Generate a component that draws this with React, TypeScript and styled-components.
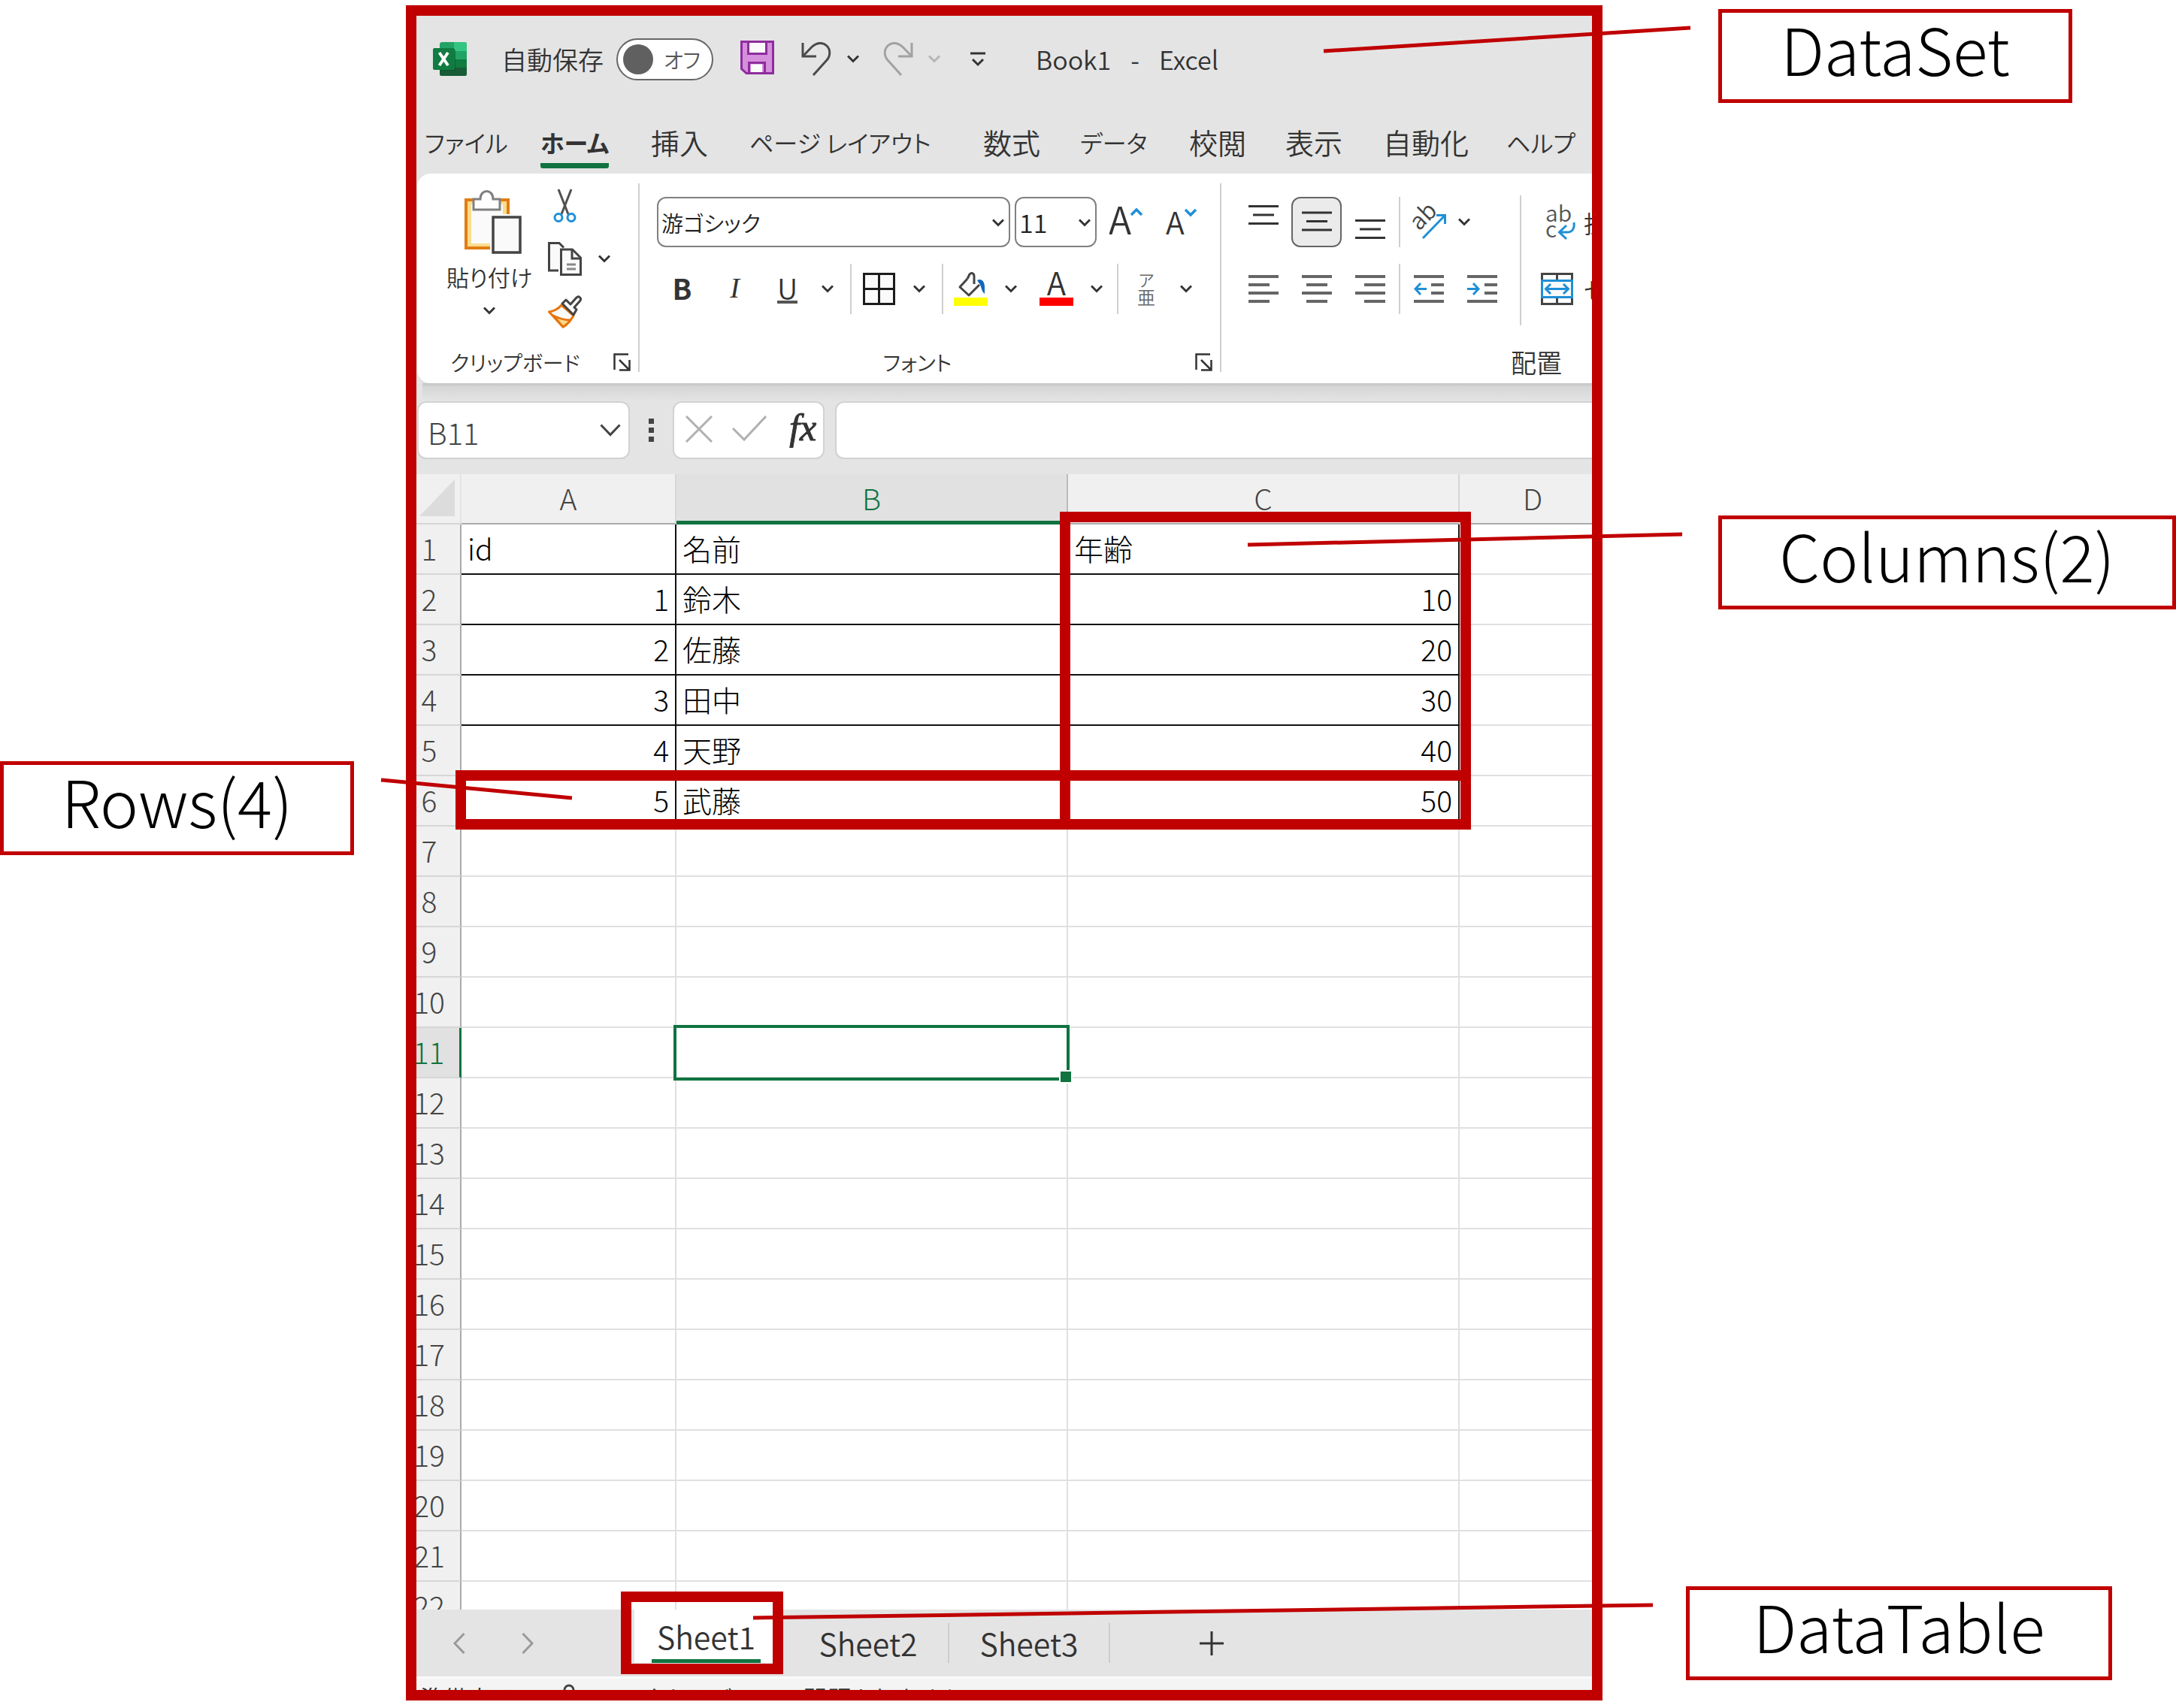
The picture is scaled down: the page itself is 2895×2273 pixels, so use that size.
import React from "react";
import styled, { createGlobalStyle, css } from "styled-components";

const RED = "#c00000";
const GREEN = "#107340";
const INK = "#333333";
const BLUE = "#1f8fd6";
const CHROME = "#e4e4e4";

const GlobalStyle = createGlobalStyle`
  * { box-sizing: border-box; }
  body { margin: 0; background: #fff; }
  body, button, input, select {
    font-family: "Noto Sans CJK JP", "Noto Sans", sans-serif;
    font-feature-settings: "palt";
    font-weight: 350;
  }
  button { border: 0; background: none; padding: 0; color: inherit; }
`;

/* ---------- page and callouts ---------- */

const Page = styled.main`
  position: relative;
  display: grid;
  grid-template-columns: 540fr 1592fr 763fr;
  padding: 7px 0 10px;
  color: ${INK};
`;

const Side = styled.aside`
  display: flex;
  flex-direction: column;
  align-items: flex-start;
`;

const LeftSide = styled(Side)`
  padding-top: 1006px;
`;

const RightSide = styled(Side)`
  justify-content: space-between;
  padding: 5px 0 27px 111px;
`;

const CalloutPair = styled.div`
  display: flex;
  flex-direction: column;
  gap: 549px;
  align-self: stretch;
  padding-left: 43px;
`;

const Callout = styled.div<{ $width: string }>`
  width: ${(p) => p.$width};
  height: 125px;
  border: 5px solid ${RED};
  background: #fff;
  color: #000;
  font-size: 86px;
  font-weight: 300;
  line-height: 94px;
  text-align: center;
  white-space: nowrap;
`;

const Connectors = styled.svg`
  position: absolute;
  inset: 0;
  width: 100%;
  height: 100%;
  pointer-events: none;
  z-index: 5;
`;

/* ---------- window ---------- */

const Window = styled.section`
  display: flex;
  flex-direction: column;
  min-width: 0;
  border: 14px solid ${RED};
  background: ${CHROME};
`;

const TitleBar = styled.header`
  display: flex;
  align-items: center;
  gap: 36px;
  height: 115px;
  padding-left: 22px;
  font-size: 34px;
`;

const AutoSave = styled.label`
  display: flex;
  align-items: center;
  gap: 17px;
  padding-left: 10px;
  white-space: nowrap;
`;

const Switch = styled.span`
  position: relative;
  display: flex;
  align-items: center;
  justify-content: space-between;
  width: 129px;
  height: 56px;
  padding: 0 15px 0 7px;
  border: 2px solid #666;
  border-radius: 28px;
  background: #fff;
  color: #555;
  font-size: 28px;

  &::before {
    content: "";
    width: 40px;
    height: 40px;
    border-radius: 50%;
    background: #606060;
  }

  input {
    position: absolute;
    inset: 0;
    margin: 0;
    opacity: 0;
  }
`;

const History = styled.div`
  display: flex;
  gap: 31px;
`;

const HistoryItem = styled.button`
  display: flex;
  align-items: center;
  gap: 20px;
`;

const Customize = styled.button`
  display: flex;
  justify-content: center;
  width: 28px;
`;

const WindowTitle = styled.h1`
  display: flex;
  gap: 26px;
  margin: 0;
  padding-left: 27px;
  font-size: 34px;
  font-weight: 350;
`;

const TabBar = styled.nav`
  display: grid;
  grid-template-columns: 154px 147px 131px 311px 129px 145px 128px 130px 164px auto;
  justify-items: start;
  height: 95px;
  padding: 24px 0 7px 11px;
`;

const RibbonTab = styled.button<{ $kana?: boolean; $active?: boolean }>`
  height: 64px;
  border-bottom: 7px solid ${(p) => (p.$active ? GREEN : "transparent")};
  border-radius: 3px;
  font-size: ${(p) => (p.$kana ? 32 : 38)}px;
  font-weight: ${(p) => (p.$active ? 700 : 350)};
  line-height: 56px;
  white-space: nowrap;
`;

/* ---------- ribbon ---------- */

const Ribbon = styled.div`
  display: flex;
  align-items: flex-start;
  height: 279px;
  margin-left: 1px;
  overflow: hidden;
  border-radius: 18px 0 0 18px;
  background: #fff;
`;

const RibbonShade = styled.div`
  height: 24px;
  margin-left: 8px;
  background: linear-gradient(#c4c4c4, #d6d6d6 20%, ${CHROME});
`;

const Group = styled.div<{ $width?: string }>`
  display: flex;
  flex: none;
  flex-direction: column;
  width: ${(p) => p.$width ?? "auto"};
`;

const GroupBody = styled.div`
  height: 224px;
`;

const GroupFooter = styled.div`
  display: flex;
  align-items: center;
  height: 55px;
  padding: 0 10px 2px 0;
`;

const GroupLabel = styled.span<{ $large?: boolean }>`
  flex: 1;
  font-size: ${(p) => (p.$large ? 34 : 28)}px;
  line-height: 40px;
  text-align: center;
  white-space: nowrap;
`;

const GroupDivider = styled.div`
  flex: none;
  width: 2px;
  height: 251px;
  margin-top: 13px;
  background: #cfcfcf;
`;

const Clipboard = styled(GroupBody)`
  display: flex;
  align-items: flex-start;
  gap: 14px;
  padding-left: 32px;
`;

const PasteButton = styled.button`
  display: flex;
  flex-direction: column;
  align-items: center;
  width: 128px;
  padding-top: 22px;
  font-size: 30px;
  line-height: 40px;
  white-space: nowrap;

  span { margin: 10px 0 20px; }
`;

const ClipTools = styled.div`
  display: grid;
  grid-template-columns: 45px 16px;
  grid-auto-rows: 45px;
  column-gap: 22px;
  row-gap: 26px;
  align-items: center;
  padding-top: 20px;

  svg { display: block; }
`;

const ClipTool = styled.button`
  grid-column: 1;
`;

const Rows = styled(GroupBody)<{ $left: number }>`
  display: flex;
  flex-direction: column;
  gap: 22px;
  padding: 31px 0 0 ${(p) => p.$left}px;
`;

const ToolRow = styled.div<{ $gap: number }>`
  display: flex;
  align-items: center;
  gap: ${(p) => p.$gap}px;
  height: 67px;
`;

const Tool = styled.button<{ $pressed?: boolean }>`
  display: flex;
  flex: none;
  align-items: center;
  justify-content: center;
  width: 67px;
  height: 67px;
  border-radius: 12px;
  font-size: 38px;
  ${(p) => p.$pressed && css`
    border: 2px solid #666;
    background: #ebebeb;
  `}
`;

const Letter = styled.span<{ $kind: "b" | "i" | "u" }>`
  padding-bottom: 4px;
  line-height: 40px;
  ${(p) => p.$kind === "b" && css`font-weight: 700;`}
  ${(p) => p.$kind === "i" && css`font-family: "Liberation Serif", serif; font-style: italic;`}
  ${(p) => p.$kind === "u" && css`padding: 0; border-bottom: 4px solid #555; line-height: 34px;`}
`;

const Arrow = styled.button<{ $narrow?: boolean }>`
  display: flex;
  flex: none;
  align-items: center;
  justify-content: center;
  width: ${(p) => (p.$narrow ? 20 : 34)}px;
  height: 67px;
`;

const Split = styled.div`
  display: flex;
  gap: 3px;
  margin-right: 7px;
`;

const ToolDivider = styled.span<{ $before: number }>`
  flex: none;
  width: 2px;
  height: 67px;
  margin-left: ${(p) => p.$before}px;
  background: #cfcfcf;
`;

const Picker = styled.span<{ $width: number }>`
  position: relative;
  flex: none;
  width: ${(p) => p.$width}px;
  height: 67px;

  select {
    width: 100%;
    height: 100%;
    padding: 0 4px;
    border: 2px solid #808080;
    border-radius: 12px;
    appearance: none;
    background: #fff;
    color: #222;
    font-size: 29px;
  }

  svg {
    position: absolute;
    right: 8px;
    top: 29px;
    pointer-events: none;
  }
`;

const SizePicker = styled(Picker)`
  select { font-size: 34px; }
`;

const Alignment = styled.div`
  display: flex;
`;

const AlignDivider = styled.div`
  flex: none;
  width: 2px;
  height: 173px;
  margin: 29px 25px 0 17px;
  background: #cfcfcf;
`;

const WideTool = styled.button`
  display: flex;
  align-items: center;
  gap: 10px;
  height: 67px;
  font-size: 32px;
  white-space: nowrap;
`;

/* ---------- formula bar ---------- */

const FormulaBar = styled.div`
  display: flex;
  align-items: center;
  height: 97px;
  padding: 0 0 20px 1px;
`;

const Field = styled.div`
  display: flex;
  align-items: center;
  height: 77px;
  border: 2px solid #d2d2d2;
  border-radius: 12px;
  background: #fff;
`;

const NameBox = styled(Field)`
  width: 283px;
  padding: 4px 10px 0 12px;

  input {
    flex: 1;
    min-width: 0;
    padding: 0;
    border: 0;
    outline: 0;
    background: none;
    color: #444;
    font-size: 40px;
    font-weight: 300;
  }
`;

const Dots = styled.div`
  display: flex;
  flex-direction: column;
  gap: 5px;
  margin: 0 25px;

  i { width: 7px; height: 7px; background: #444; }
`;

const FormulaTools = styled(Field)`
  gap: 26px;
  width: 202px;
  margin-right: 14px;
  padding-left: 15px;
`;

const FormulaInput = styled.input`
  flex: 1;
  min-width: 0;
  height: 77px;
  border: 2px solid #d2d2d2;
  border-right: 0;
  border-radius: 12px 0 0 12px;
  background: #fff;
`;

/* ---------- sheet ---------- */

const SheetArea = styled.div`
  position: relative;
  height: 1511px;
  overflow: hidden;
  background: #fff;
`;

const GridTable = styled.table`
  width: calc(100% + 44px);
  margin-left: -24px;
  border-collapse: separate;
  border-spacing: 0;
  table-layout: fixed;
  font-size: 39px;
  font-weight: 300;
  line-height: 50px;

  th { font-weight: 300; color: #444; background: #f0f0f0; }
  th, td { padding: 0 0 3px; white-space: nowrap; }
`;

const ColumnHead = styled.th<{ $active?: boolean }>`
  height: 67px;
  border-right: 2px solid #d6d6d6;
  border-bottom: 2px solid #ababab;
  ${(p) => p.$active && css`
    && { background: #e1e1e1; color: ${GREEN}; padding-bottom: 0; }
    border-right-color: #bbb;
    border-bottom: 5px solid ${GREEN};
  `}
`;

const Corner = styled.th`
  height: 67px;
  border-right: 2px solid #e4e4e4;
  border-bottom: 2px solid #d6d6d6;

  svg { display: block; margin-left: auto; margin-right: 7px; }
`;

const RowHead = styled.th<{ $active?: boolean }>`
  height: 67px;
  border-right: 2px solid #ababab;
  border-bottom: 2px solid #d6d6d6;
  ${(p) => p.$active && css`
    && { background: #e1e1e1; color: ${GREEN}; }
    border-right: 3px solid ${GREEN};
  `}
`;

const Cell = styled.td<{ $boxed?: boolean; $number?: boolean }>`
  position: relative;
  && { padding: 0 8px 3px; }
  border-right: 2px solid ${(p) => (p.$boxed ? "#111" : "#e0e0e0")};
  border-bottom: 2px solid ${(p) => (p.$boxed ? "#111" : "#e0e0e0")};
  color: #000;
  text-align: ${(p) => (p.$number ? "right" : "left")};
`;

const Selection = styled.span`
  position: absolute;
  inset: -4px -4px -5px -4px;
  z-index: 1;
  border: 4px solid ${GREEN};

  &::after {
    content: "";
    position: absolute;
    right: -8px;
    bottom: -8px;
    width: 14px;
    height: 14px;
    border: 2px solid #fff;
    background: ${GREEN};
  }
`;

const Outline = styled.div<{ $left: number; $top: number; $width: number; $height: number }>`
  position: absolute;
  left: ${(p) => p.$left}px;
  top: ${(p) => p.$top}px;
  z-index: 3;
  width: ${(p) => p.$width}px;
  height: ${(p) => p.$height}px;
  border: 14px solid ${RED};
  pointer-events: none;
`;

/* ---------- sheet tabs and status ---------- */

const SheetTabs = styled.nav`
  display: flex;
  align-items: center;
  height: 89px;
  padding-left: 49px;
`;

const SheetNav = styled.div`
  display: flex;
  gap: 75px;
  width: 241px;

  svg { display: block; }
`;

const SheetTab = styled.button`
  width: 214px;
  height: 53px;
  border-right: 2px solid #cdcdcd;
  font-size: 41px;
  line-height: 51px;
`;

const ActiveSheet = styled.div`
  position: relative;
  align-self: flex-start;
  display: flex;
  justify-content: center;
  width: 191px;
  height: 71px;
  margin-right: 14px;
  background: #fff;

  button {
    width: 145px;
    height: 71px;
    padding-top: 4px;
    border-bottom: 5px solid ${GREEN};
    font-size: 41px;
    line-height: 60px;
  }
`;

const AddSheet = styled.button`
  display: flex;
  margin-left: 119px;
`;

const StatusBar = styled.footer`
  display: flex;
  gap: 56px;
  height: 18px;
  padding-left: 4px;
  overflow: hidden;
  border-top: 3px solid #fbfbfb;
  background: #f4f4f4;
  font-size: 32px;
  line-height: 50px;
  white-space: nowrap;

  svg { flex: none; margin-top: 7px; }
`;

/* ---------- icons ---------- */

const Chevron = ({ color = INK }: { color?: string }) => (
  <svg width="16" height="11" viewBox="0 0 16 11" fill="none" stroke={color} strokeWidth="3">
    <path d="M1 1.5 8 8.5 15 1.5" />
  </svg>
);

const ExcelLogo = () => (
  <svg width="45" height="45" viewBox="0 0 45 45">
    <path d="M11 0h17v12H9V2z" fill="#21a366" />
    <path d="M28 0h15a2 2 0 0 1 2 2v10H28z" fill="#33c481" />
    <path d="M9 12h19v11H9z" fill="#107c41" />
    <path d="M28 12h17v11H28z" fill="#21a366" />
    <path d="M28 23h17v11H28z" fill="#107c41" />
    <path d="M9 23h19v11h17v9a2 2 0 0 1-2 2H11a2 2 0 0 1-2-2z" fill="#185c37" />
    <path d="M9 10h19a2 2 0 0 1 2 2v26H9z" fill="#0b4a2a" opacity=".5" />
    <rect y="8" width="29" height="29" rx="2" fill="#107c41" />
    <path d="M8.500 14 20 31M20 14 8.500 31" stroke="#fff" strokeWidth="4" />
  </svg>
);

const SaveIcon = () => (
  <svg width="45" height="45" viewBox="0 0 45 45" stroke="#8e2d9e" strokeWidth="3">
    <path d="M1.500 1.500h42v42H8l-6.500-6z" fill="#d58fdc" />
    <path d="M10.500 1.500h24v16h-24z" fill="#fafafa" />
    <path d="M11.500 43.500v-14h21v14" fill="#d58fdc" />
    <path d="M14 43.500V31.500h15v12z" fill="#fafafa" stroke="none" />
    <path d="M8 43.500h35.500" />
  </svg>
);

const UndoIcon = ({ flip }: { flip?: boolean }) => (
  <svg width="41" height="45" viewBox="0 0 41 45" fill="none" stroke={flip ? "#a2a2a2" : "#4a4a4a"} strokeWidth="3">
    <g transform={flip ? "matrix(-1 0 0 1 41 0)" : undefined}>
      <path d="M2 1v18h18" />
      <path d="M3 18 14 6.500C21 0 29 0 34 5s5 13 0 19L16 44" />
    </g>
  </svg>
);

const CustomizeIcon = () => (
  <svg width="20" height="20" viewBox="0 0 20 20" fill="none" stroke={INK} strokeWidth="3">
    <path d="M0 2h20M3 10l7 7 7-7" />
  </svg>
);

const PasteIcon = () => (
  <svg width="86" height="85" viewBox="-10 0 86 85">
    <path d="M2 13h56v64H2z" fill="#fbdc8e" stroke="#e07d12" strokeWidth="4" />
    <path d="M9 19h42v52H9z" fill="#fafafa" />
    <path d="M34 32h42v53H34z" fill="#fff" />
    <path d="M12 12h9c0-14 17-14 17 0h9v14H12z" fill="#fff" stroke="#808080" strokeWidth="3" />
    <path d="M38 36h36v47H38z" fill="#fafafa" stroke="#444" strokeWidth="3.500" />
  </svg>
);

const CutIcon = () => (
  <svg width="45" height="45" viewBox="0 0 45 45" fill="none" strokeWidth="3">
    <path d="M14 1 27 34M31 1 18 34" stroke="#505050" />
    <circle cx="14" cy="38.500" r="5" stroke={BLUE} />
    <circle cx="31" cy="38.500" r="5" stroke={BLUE} />
  </svg>
);

const CopyIcon = () => (
  <svg width="45" height="45" viewBox="0 0 45 45" fill="#fafafa" stroke="#444" strokeWidth="3">
    <path d="M14 38H1.500V1.500H15l6 6" />
    <path d="M17.500 10h15l11 11v22.500h-26z" />
    <path d="M32 10v12h11.500" fill="none" />
    <path d="M25 30h12M25 36h12" stroke="#888" />
  </svg>
);

const BrushIcon = () => (
  <svg width="45" height="45" viewBox="0 0 45 45" strokeWidth="3" strokeLinejoin="round">
    <path d="M18 13C13 19 8 21 1.500 22L20 42c6-4 11-9 14-15z" fill="#fafafa" stroke="#e8750c" />
    <path d="M7 27c8 4 16 6 23 6-3 4-6 7-10 9z" fill="#fbd98a" stroke="#e8750c" />
    <path d="M19 11l5-5 6 6 8-9c3-3 7 1 5 4l-8 9 3 3-4 7z" fill="#fafafa" stroke="#444" />
  </svg>
);

const LauncherIcon = () => (
  <svg width="23" height="24" viewBox="0 0 23 24" fill="none" stroke={INK} strokeWidth="2.500">
    <path d="M1.500 22V1.500H20M8 9l13 13M21.500 9v13.500H8" />
  </svg>
);

const SizeIcon = ({ down }: { down?: boolean }) => (
  <svg width="46" height="44" viewBox="0 0 46 44">
    <text x={down ? 2 : -1} y="38" fontSize={down ? 41 : 50} fill="#333">A</text>
    <path d={down ? "M28 5l7 7 7-7" : "M29 12l7-7 7 7"} fill="none" stroke={BLUE} strokeWidth="3.500" />
  </svg>
);

const BordersIcon = () => (
  <svg width="43" height="43" viewBox="0 0 43 43" fill="#fafafa" stroke="#1c1c1c" strokeWidth="3">
    <path d="M1.500 1.500h40v40h-40zM21.500 1.500v40M1.500 21.500h40" />
  </svg>
);

const FillIcon = () => (
  <svg width="45" height="45" viewBox="0 0 45 45">
    <path d="M0 34h45v11H0z" fill="#ffff00" />
    <path d="M18 9 8 20l12 11 14-14" fill="#fafafa" stroke="#444" strokeWidth="3" strokeLinejoin="round" />
    <path d="M18 9l3-6c3-3 6-1 6 3v10" fill="none" stroke="#444" strokeWidth="3" />
    <path d="M31 11c6-3 10 2 10 9v9c-3-2-4-7-6-12z" fill="#1069bb" />
  </svg>
);

const ColorIcon = () => (
  <svg width="45" height="45" viewBox="0 0 45 45">
    <path d="M0 34h45v11H0z" fill="#ff0000" />
    <text x="22.500" y="31" fontSize="42" textAnchor="middle" fill="#333">A</text>
  </svg>
);

const RubyIcon = () => (
  <svg width="24" height="48" viewBox="0 0 24 48" fill="#666">
    <text x="12" y="20" fontSize="22" textAnchor="middle">ア</text>
    <text x="12" y="44" fontSize="24" textAnchor="middle">亜</text>
  </svg>
);

const Lines = ({ spans, step, color, top }: { spans: number[][]; step: number; color: string; top: number }) => (
  <svg width="40" height="45" viewBox="0 0 40 45" stroke={color} strokeWidth={spans.length === 3 ? 3 : 4}>
    {spans.map(([a, b], i) => (
      <path key={i} d={`M${a} ${top + i * step}H${b}`} />
    ))}
  </svg>
);

const VERTICAL = [[0, 40], [6, 34], [0, 40]];

const OrientationIcon = () => (
  <svg width="46" height="46" viewBox="0 0 46 46">
    <text transform="translate(10 35) rotate(-45)" fontSize="31" fill="#444">ab</text>
    <path d="M15 44 44 14M33 13.500h11.500V25" fill="none" stroke={BLUE} strokeWidth="3" />
  </svg>
);

const IndentIcon = ({ out }: { out?: boolean }) => (
  <svg width="40" height="45" viewBox="0 0 40 45" fill="none" stroke="#666" strokeWidth="4">
    <path d="M0 6h40M23 17h17M23 28h17M0 39h40" />
    <path d={out ? "M17 22.500H2M9 15l-7 7.500 7 7.500" : "M0 22.500h15M8 15l7 7.500-7 7.500"} stroke={BLUE} strokeWidth="3" />
  </svg>
);

const WrapIcon = () => (
  <svg width="48" height="48" viewBox="0 0 48 48">
    <text x="7" y="23" fontSize="30" fill="#555">ab</text>
    <text x="7" y="44" fontSize="30" fill="#555">c</text>
    <path d="M45 24c1 8-2 13-9 13H26M35 28l-9.500 9 9.500 9" fill="none" stroke={BLUE} strokeWidth="3" />
  </svg>
);

const MergeIcon = () => (
  <svg width="48" height="45" viewBox="0 0 48 45" fill="none" stroke="#444" strokeWidth="3">
    <path d="M2.500 2.500h40v40h-40zM22.500 2v10M22.500 33v10" />
    <path d="M2.500 11.500h40v22h-40z" fill="#fafafa" stroke={BLUE} />
    <path d="M8 22.500h29M14 16l-6.500 6.500L14 29M31 16l6.500 6.500L31 29" stroke={BLUE} />
  </svg>
);

/* ---------- data ---------- */

const TABS: { label: string; kana?: boolean; active?: boolean }[] = [
  { label: "ファイル", kana: true },
  { label: "ホーム", kana: true, active: true },
  { label: "挿入" },
  { label: "ページ レイアウト", kana: true },
  { label: "数式" },
  { label: "データ", kana: true },
  { label: "校閲" },
  { label: "表示" },
  { label: "自動化" },
  { label: "ヘルプ", kana: true },
];

const RECORDS = [
  ["id", "名前", "年齢"],
  ["1", "鈴木", "10"],
  ["2", "佐藤", "20"],
  ["3", "田中", "30"],
  ["4", "天野", "40"],
  ["5", "武藤", "50"],
];

const ROW_COUNT = 22;
const SELECTED_ROW = 11;

const Sheet = () => (
  <GridTable>
    <colgroup>
      <col style={{ width: 84 }} />
      <col style={{ width: 286 }} />
      <col style={{ width: 521 }} />
      <col style={{ width: 521 }} />
      <col />
    </colgroup>
    <thead>
      <tr>
        <Corner>
          <svg width="47" height="49" viewBox="0 0 47 49"><path d="M47 0v49H0z" fill="#dcdcdc" /></svg>
        </Corner>
        {["A", "B", "C", "D"].map((c) => (
          <ColumnHead key={c} scope="col" $active={c === "B"}>{c}</ColumnHead>
        ))}
      </tr>
    </thead>
    <tbody>
      {Array.from({ length: ROW_COUNT }, (_, i) => {
        const record = RECORDS[i];
        const row = i + 1;
        return (
          <tr key={row}>
            <RowHead scope="row" $active={row === SELECTED_ROW}>{row}</RowHead>
            {[0, 1, 2].map((c) => (
              <Cell key={c} $boxed={!!record} $number={i > 0 && c !== 1}>
                {record?.[c]}
                {row === SELECTED_ROW && c === 1 && <Selection />}
              </Cell>
            ))}
            <Cell />
          </tr>
        );
      })}
    </tbody>
  </GridTable>
);

export default function App() {
  return (
    <>
      <GlobalStyle />
      <Page>
        <LeftSide>
          <Callout $width="471px">Rows(4)</Callout>
        </LeftSide>

        <Window>
          <TitleBar>
            <ExcelLogo />
            <AutoSave>
              <span>自動保存</span>
              <Switch><input type="checkbox" role="switch" /><span>オフ</span></Switch>
            </AutoSave>
            <button aria-label="保存"><SaveIcon /></button>
            <History>
              <HistoryItem aria-label="元に戻す"><UndoIcon /><Chevron /></HistoryItem>
              <HistoryItem aria-label="やり直し"><UndoIcon flip /><Chevron color="#b5b5b5" /></HistoryItem>
            </History>
            <Customize aria-label="カスタマイズ"><CustomizeIcon /></Customize>
            <WindowTitle><span>Book1</span><span>-</span><span>Excel</span></WindowTitle>
          </TitleBar>

          <TabBar>
            {TABS.map((t) => (
              <RibbonTab key={t.label} $kana={t.kana} $active={t.active}>{t.label}</RibbonTab>
            ))}
          </TabBar>

          <Ribbon>
            <Group $width="294px">
              <Clipboard>
                <PasteButton><PasteIcon /><span>貼り付け</span><Chevron /></PasteButton>
                <ClipTools>
                  <ClipTool aria-label="切り取り"><CutIcon /></ClipTool>
                  <ClipTool aria-label="コピー"><CopyIcon /></ClipTool>
                  <button aria-label="コピーのオプション"><Chevron /></button>
                  <ClipTool aria-label="書式のコピー"><BrushIcon /></ClipTool>
                </ClipTools>
              </Clipboard>
              <GroupFooter><GroupLabel>クリップボード</GroupLabel><LauncherIcon /></GroupFooter>
            </Group>
            <GroupDivider />

            <Group $width="772px">
              <Rows $left={23}>
                <ToolRow $gap={6}>
                  <Picker $width={470}>
                    <select aria-label="フォント"><option>游ゴシック</option></select>
                    <Chevron />
                  </Picker>
                  <SizePicker $width={109}>
                    <select aria-label="フォント サイズ"><option>11</option></select>
                    <Chevron />
                  </SizePicker>
                  <Tool aria-label="拡大"><SizeIcon /></Tool>
                  <Tool aria-label="縮小"><SizeIcon down /></Tool>
                </ToolRow>
                <ToolRow $gap={3}>
                  <Tool><Letter $kind="b">B</Letter></Tool>
                  <Tool><Letter $kind="i">I</Letter></Tool>
                  <Split>
                    <Tool><Letter $kind="u">U</Letter></Tool>
                    <Arrow aria-label="下線"><Chevron /></Arrow>
                  </Split>
                  <ToolDivider $before={3} />
                  <Split>
                    <Tool aria-label="罫線"><BordersIcon /></Tool>
                    <Arrow aria-label="罫線の種類"><Chevron /></Arrow>
                  </Split>
                  <ToolDivider $before={3} />
                  <Split>
                    <Tool aria-label="塗りつぶし"><FillIcon /></Tool>
                    <Arrow aria-label="塗りつぶしの色"><Chevron /></Arrow>
                  </Split>
                  <Split>
                    <Tool aria-label="文字色"><ColorIcon /></Tool>
                    <Arrow aria-label="文字色の選択"><Chevron /></Arrow>
                  </Split>
                  <ToolDivider $before={0} />
                  <Split>
                    <Tool aria-label="ふりがな"><RubyIcon /></Tool>
                    <Arrow aria-label="ふりがなの設定"><Chevron /></Arrow>
                  </Split>
                </ToolRow>
              </Rows>
              <GroupFooter><GroupLabel>フォント</GroupLabel><LauncherIcon /></GroupFooter>
            </Group>
            <GroupDivider />

            <Group $width="848px">
              <Alignment>
                <Rows $left={22}>
                  <ToolRow $gap={4}>
                    <Tool aria-label="上揃え"><Lines spans={VERTICAL} step={11.5} color="#333" top={1.5} /></Tool>
                    <Tool aria-label="上下中央揃え" $pressed><Lines spans={VERTICAL} step={11.5} color="#333" top={10} /></Tool>
                    <Tool aria-label="下揃え"><Lines spans={VERTICAL} step={11.5} color="#333" top={20.5} /></Tool>
                    <ToolDivider $before={1} />
                    <Tool aria-label="方向"><OrientationIcon /></Tool>
                    <Arrow aria-label="方向の選択" $narrow><Chevron /></Arrow>
                  </ToolRow>
                  <ToolRow $gap={4}>
                    <Tool aria-label="左揃え"><Lines spans={[[0, 40], [0, 28], [0, 40], [0, 28]]} step={11} color="#666" top={6} /></Tool>
                    <Tool aria-label="中央揃え"><Lines spans={[[0, 40], [6, 34], [0, 40], [6, 34]]} step={11} color="#666" top={6} /></Tool>
                    <Tool aria-label="右揃え"><Lines spans={[[0, 40], [12, 40], [0, 40], [12, 40]]} step={11} color="#666" top={6} /></Tool>
                    <ToolDivider $before={1} />
                    <Tool aria-label="インデントを減らす"><IndentIcon out /></Tool>
                    <Tool aria-label="インデントを増やす"><IndentIcon /></Tool>
                  </ToolRow>
                </Rows>
                <AlignDivider />
                <Rows $left={0}>
                  <WideTool><WrapIcon />折り返して全体を表示する</WideTool>
                  <WideTool><MergeIcon />セルを結合して中央揃え</WideTool>
                </Rows>
              </Alignment>
              <GroupFooter><GroupLabel $large>配置</GroupLabel></GroupFooter>
            </Group>
          </Ribbon>
          <RibbonShade />

          <FormulaBar>
            <NameBox>
              <input aria-label="名前ボックス" defaultValue="B11" />
              <button aria-label="セルの一覧">
                <svg width="28" height="17" viewBox="0 0 28 17" fill="none" stroke="#444" strokeWidth="3"><path d="M1.500 1.500 14 14.500 26.500 1.500" /></svg>
              </button>
            </NameBox>
            <Dots><i /><i /><i /></Dots>
            <FormulaTools>
              <button aria-label="キャンセル">
                <svg width="36" height="36" viewBox="0 0 36 36" stroke="#b0b0b0" strokeWidth="3"><path d="M1 1l34 34M35 1 1 35" /></svg>
              </button>
              <button aria-label="入力">
                <svg width="46" height="36" viewBox="0 0 46 36" fill="none" stroke="#b0b0b0" strokeWidth="3"><path d="M1 17 16 32 45 1" /></svg>
              </button>
              <button aria-label="関数の挿入">
                <svg width="46" height="50" viewBox="0 0 46 50">
                  <text x="4" y="40" fontFamily="Liberation Serif, serif" fontStyle="italic" fontWeight="400" fontSize="50" fill="#333" stroke="#333">fx</text>
                </svg>
              </button>
            </FormulaTools>
            <FormulaInput aria-label="数式" />
          </FormulaBar>

          <SheetArea>
            <Sheet />
            <Outline $left={856} $top={50} $width={547} $height={423} />
            <Outline $left={52} $top={394} $width={1351} $height={79} />
          </SheetArea>

          <SheetTabs>
            <SheetNav>
              <button aria-label="前のシート">
                <svg width="16" height="28" viewBox="0 0 16 28" fill="none" stroke="#999" strokeWidth="3"><path d="M14.500 1 2 14l12.500 13" /></svg>
              </button>
              <button aria-label="次のシート">
                <svg width="16" height="28" viewBox="0 0 16 28" fill="none" stroke="#999" strokeWidth="3"><path d="M1.500 1 14 14 1.500 27" /></svg>
              </button>
            </SheetNav>
            <ActiveSheet>
              <button>Sheet1</button>
              <Outline $left={-18} $top={-24} $width={216} $height={110} />
            </ActiveSheet>
            <SheetTab>Sheet2</SheetTab>
            <SheetTab>Sheet3</SheetTab>
            <AddSheet aria-label="新しいシート">
              <svg width="32" height="32" viewBox="0 0 32 32" stroke={INK} strokeWidth="3"><path d="M16 0v32M0 16h32" /></svg>
            </AddSheet>
          </SheetTabs>
          <StatusBar>
            <span>準備完了</span>
            <svg width="30" height="30" viewBox="0 0 30 30" fill="none" stroke="#444" strokeWidth="3"><circle cx="15" cy="8" r="6" /></svg>
            <span>アクセシビリティ: 問題ありません</span>
          </StatusBar>
        </Window>

        <RightSide>
          <CalloutPair>
            <Callout $width="471px">DataSet</Callout>
            <Callout $width="100%">Columns(2)</Callout>
          </CalloutPair>
          <Callout $width="567px">DataTable</Callout>
        </RightSide>

        <Connectors viewBox="0 0 2895 2273" preserveAspectRatio="none" stroke={RED} strokeWidth="5">
          <path d="M1761 68 2249 37" />
          <path d="M1660 725 2238 711" />
          <path d="M507 1038 761 1062" />
          <path d="M1002 2153 2199 2136" />
        </Connectors>
      </Page>
    </>
  );
}
